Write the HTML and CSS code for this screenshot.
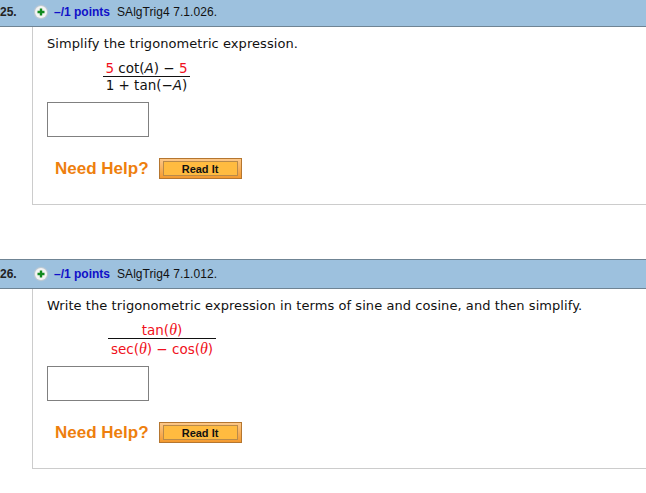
FILE: index.html
```html
<!DOCTYPE html>
<html lang="en">
<head>
  <meta charset="UTF-8">
  <title>Questions</title>
  <link rel="stylesheet" href="styles.css">
</head>
<body>
  <div class="question first">
    <div class="q-head">
      <span class="q-num">25.</span>
      <span class="plus"><svg width="12" height="12" viewBox="0 0 12 12"><path d="M6 2.5v7M2.5 6h7" stroke="#118a1e" stroke-width="2.4"/></svg></span>
      <span class="points">&ndash;/1 points</span>
      <span class="q-code">SAlgTrig4 7.1.026.</span>
    </div>
    <div class="q-body">
      <p class="prompt">Simplify the trigonometric expression.</p>
      <div class="frac frac-a">
        <div class="top"><span class="red">5</span> cot(<i>A</i>) &minus; <span class="red">5</span></div>
        <div class="bottom">1 + tan(&minus;<i>A</i>)</div>
      </div>
      <div class="answer"></div>
      <div class="help">
        <span class="need">Need Help?</span>
        <a class="read-it"><span>Read It</span></a>
      </div>
    </div>
  </div>

  <div class="question">
    <div class="q-head">
      <span class="q-num">26.</span>
      <span class="plus"><svg width="12" height="12" viewBox="0 0 12 12"><path d="M6 2.5v7M2.5 6h7" stroke="#118a1e" stroke-width="2.4"/></svg></span>
      <span class="points">&ndash;/1 points</span>
      <span class="q-code">SAlgTrig4 7.1.012.</span>
    </div>
    <div class="q-body">
      <p class="prompt">Write the trigonometric expression in terms of sine and cosine, and then simplify.</p>
      <div class="frac frac-b red">
        <div class="top">tan(<i class="theta">&theta;</i>)</div>
        <div class="bottom">sec(<i class="theta">&theta;</i>) &minus; cos(<i class="theta">&theta;</i>)</div>
      </div>
      <div class="answer"></div>
      <div class="help">
        <span class="need">Need Help?</span>
        <a class="read-it"><span>Read It</span></a>
      </div>
    </div>
  </div>
</body>
</html>
```

FILE: styles.css
```css
body {
  margin: 0;
  background: #fff;
  overflow: hidden;
  font-family: "DejaVu Sans", sans-serif;
  color: #111;
}

.question {
  margin-bottom: 54px;
}

.question:last-child {
  margin-bottom: 0;
}

.first {
  margin-top: -3px;
}

.q-head {
  display: flex;
  align-items: center;
  height: 28px;
  background: #9dc1de;
  border-top: 1px solid #6f8494;
  border-bottom: 1px solid #6f8494;
  font-family: "Liberation Sans", Arial, sans-serif;
  font-size: 12px;
}

.q-num {
  width: 35px;
  font-weight: bold;
  color: #222;
}

.plus {
  display: flex;
  align-items: center;
  justify-content: center;
  width: 12px;
  height: 12px;
  border-radius: 50%;
  background: #f4f4f4;
  box-shadow: 0 0 1px 1px #c4ccd2;
}

.points {
  margin-left: 7px;
  font-weight: bold;
  color: #1010c8;
}

.q-code {
  margin-left: 7px;
  letter-spacing: 0.005em;
  color: #111;
}

.q-body {
  margin-left: 32px;
  border-left: 1px solid #ccc;
  border-bottom: 1px solid #ccc;
  padding: 9px 0 0 14px;
  height: 168px;
  font-size: 13px;
}

.question:last-child .q-body {
  height: 170px;
}

.prompt {
  margin: 0;
  line-height: 16px;
  letter-spacing: 0.07px;
}

.frac {
  text-align: center;
  line-height: 15px;
  margin-top: 9px;
  font-size: 13.5px;
}

.frac-a {
  width: 87px;
  margin-left: 56px;
}

.frac-b {
  width: 108px;
  margin-left: 61px;
  margin-bottom: 1px;
}

.top {
  line-height: 14px;
  padding-bottom: 1px;
  border-bottom: 1px solid #111;
}

.bottom {
  padding-top: 1px;
}

.frac-b .bottom {
  padding-top: 2px;
}

.red {
  color: #f01020;
}

.theta {
  font-family: "Liberation Serif", serif;
  font-size: 16px;
}

.answer {
  width: 100px;
  height: 33px;
  margin-top: 9px;
  border: 1px solid #808080;
}

.help {
  display: flex;
  align-items: center;
  margin-top: 21px;
  margin-left: 8px;
}

.need {
  font-family: "Liberation Sans", Arial, sans-serif;
  font-size: 17px;
  font-weight: bold;
  color: #ee7f0e;
}

.read-it {
  display: block;
  margin-left: 10px;
  padding: 2px 3px;
  background: linear-gradient(#fcc788, #f49a2e);
  border: 1px solid #b5762f;
}

.read-it span {
  display: block;
  width: 73px;
  height: 12px;
  padding-top: 1px;
  line-height: 13px;
  text-align: center;
  background: #ffbb40;
  border: 1px solid #b98a4a;
  font-family: "Liberation Sans", Arial, sans-serif;
  font-size: 11px;
  font-weight: bold;
  color: #111;
}
```
